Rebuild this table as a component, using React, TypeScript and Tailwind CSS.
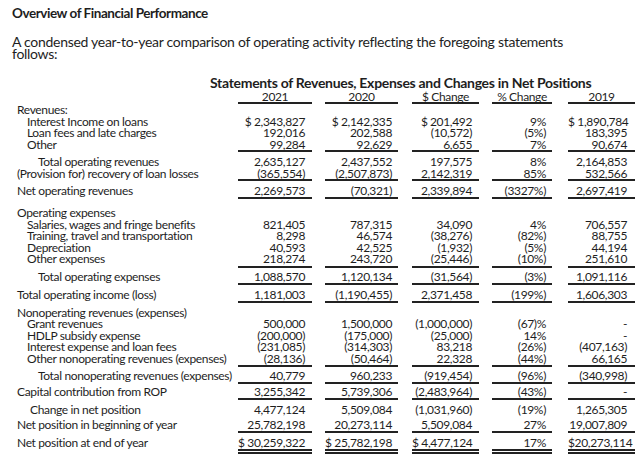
import React from "react";

type Cell = string | { dollar: string };

type Row = {
  label: string;
  ind: string;
  v?: Cell[];
  ul?: boolean;
  dbl?: boolean;
  cls: string;
};

const rows: Row[] = [
  { label: "Revenues:", ind: "pl-[17px]", cls: "h-[11.5px]" },
  { label: "Interest Income on loans", ind: "pl-[27px]", v: ["$ 2,343,827", "$ 2,142,335", { dollar: "201,492" }, "9%", "$ 1,890,784"], cls: "mt-[0.5px] h-[11.5px]" },
  { label: "Loan fees and late charges", ind: "pl-[27px]", v: ["192,016", "202,588", "(10,572)", "(5%)", "183,395"], cls: "h-[11.5px]" },
  { label: "Other", ind: "pl-[27px]", v: ["99,284", "92,629", "6,655", "7%", "90,674"], ul: true, cls: "h-[13.5px]" },
  { label: "Total operating revenues", ind: "pl-[38px]", v: ["2,635,127", "2,437,552", "197,575", "8%", "2,164,853"], cls: "mt-[4px] h-[11.5px]" },
  { label: "(Provision for) recovery of loan losses", ind: "pl-[17px]", v: ["(365,554)", "(2,507,873)", "2,142,319", "85%", "532,566"], ul: true, cls: "h-[13.5px]" },
  { label: "Net operating revenues", ind: "pl-[17px]", v: ["2,269,573", "(70,321)", "2,339,894", "(3327%)", "2,697,419"], ul: true, cls: "mt-[3.5px] h-[14.5px]" },
  { label: "Operating expenses", ind: "pl-[17px]", cls: "mt-[8px] h-[11.5px]" },
  { label: "Salaries, wages and fringe benefits", ind: "pl-[27px]", v: ["821,405", "787,315", "34,090", "4%", "706,557"], cls: "h-[11.5px]" },
  { label: "Training, travel and transportation", ind: "pl-[27px]", v: ["8,298", "46,574", "(38,276)", "(82%)", "88,755"], cls: "h-[11.5px]" },
  { label: "Depreciation", ind: "pl-[27px]", v: ["40,593", "42,525", "(1,932)", "(5%)", "44,194"], cls: "h-[11.5px]" },
  { label: "Other expenses", ind: "pl-[27px]", v: ["218,274", "243,720", "(25,446)", "(10%)", "251,610"], ul: true, cls: "h-[14.5px]" },
  { label: "Total operating expenses", ind: "pl-[38px]", v: ["1,088,570", "1,120,134", "(31,564)", "(3%)", "1,091,116"], ul: true, cls: "mt-[3.5px] h-[14px]" },
  { label: "Total operating income (loss)", ind: "pl-[17px]", v: ["1,181,003", "(1,190,455)", "2,371,458", "(199%)", "1,606,303"], ul: true, cls: "mt-[4px] h-[14px]" },
  { label: "Nonoperating revenues (expenses)", ind: "pl-[17px]", cls: "mt-[3.5px] h-[11.5px]" },
  { label: "Grant revenues", ind: "pl-[27px]", v: ["500,000", "1,500,000", "(1,000,000)", "(67)%", "-"], cls: "h-[11.5px]" },
  { label: "HDLP subsidy expense", ind: "pl-[27px]", v: ["(200,000)", "(175,000)", "(25,000)", "14%", "-"], cls: "h-[11.5px]" },
  { label: "Interest expense and loan fees", ind: "pl-[27px]", v: ["(231,085)", "(314,303)", "83,218", "(26%)", "(407,163)"], cls: "h-[11.5px]" },
  { label: "Other nonoperating revenues (expenses)", ind: "pl-[27px]", v: ["(28,136)", "(50,464)", "22,328", "(44%)", "66,165"], ul: true, cls: "h-[14px]" },
  { label: "Total nonoperating revenues (expenses)", ind: "pl-[38px]", v: ["40,779", "960,233", "(919,454)", "(96%)", "(340,998)"], ul: true, cls: "mt-[3.5px] h-[14px]" },
  { label: "Capital contribution from ROP", ind: "pl-[17px]", v: ["3,255,342", "5,739,306", "(2,483,964)", "(43%)", "-"], ul: true, cls: "mt-[1.5px] h-[14px]" },
  { label: "Change in net position", ind: "pl-[30px]", v: ["4,477,124", "5,509,084", "(1,031,960)", "(19%)", "1,265,305"], cls: "mt-[4px] h-[11.5px]" },
  { label: "Net position in beginning of year", ind: "pl-[17px]", v: ["25,782,198", "20,273,114", "5,509,084", "27%", "19,007,809"], ul: true, cls: "mt-[3.5px] h-[14.5px]" },
  { label: "Net position at end of year", ind: "pl-[17px]", v: ["$ 30,259,322", "$ 25,782,198", "$ 4,477,124", "17%", "$20,273,114"], dbl: true, cls: "mt-[4px] h-[17px]" },
];

const cols = [
  "w-[74px] pr-[7px]",
  "ml-[13px] w-[73px] pr-[6px]",
  "ml-[14px] w-[67px] pr-[7px]",
  "ml-[13px] w-[60px] pr-[6px]",
  "ml-[16px] w-[67px] pr-[8px]",
];

const headCols = [
  "w-[74px]",
  "ml-[13px] w-[73px]",
  "ml-[14px] w-[67px]",
  "ml-[13px] w-[60px]",
  "ml-[16px] w-[67px]",
];

const heads = ["2021", "2020", "$ Change", "% Change", "2019"];

function TableRow({ r }: { r: Row }) {
  const line = r.dbl
    ? "border-b-[5px] border-double border-[#222]"
    : r.ul
    ? "border-b-2 border-[#222]"
    : "";
  return (
    <div className={`flex leading-[11.5px] ${r.cls}`}>
      <div className={`w-[238px] shrink-0 whitespace-nowrap ${r.ind}`}>{r.label}</div>
      {r.v &&
        r.v.map((c, i) => (
          <div key={i} className={`shrink-0 whitespace-nowrap text-right ${cols[i]} ${line}`}>
            {typeof c === "string" ? (
              c
            ) : (
              <div className="flex justify-between pl-[9px]">
                <span>$</span>
                <span>{c.dollar}</span>
              </div>
            )}
          </div>
        ))}
    </div>
  );
}

export default function App() {
  return (
    <div className="w-[640px] h-[465px] overflow-hidden bg-white text-[#1e1e1e] font-['Lato',sans-serif]">
      <h1 className="pl-[12px] pt-[5px] text-[13.5px] font-bold leading-[16px] tracking-[-0.45px]">
        Overview of Financial Performance
      </h1>
      <p className="ml-[12px] mt-[15px] w-[551px] text-justify text-[14px] leading-[12px] tracking-[-0.3px]">
        A condensed year-to-year comparison of operating activity reflecting the foregoing statements follows:
      </p>
      <div className="mt-[15px] pl-[210px] whitespace-nowrap text-[14px] font-bold leading-[16px] tracking-[-0.3px]">
        Statements of Revenues, Expenses and Changes in Net Positions
      </div>
      <div className="text-[12px] tracking-[-0.35px]">
        <div className="flex h-[12.5px] leading-[11.5px]">
          <div className="w-[238px] shrink-0" />
          {heads.map((h, i) => (
            <div key={h} className={`shrink-0 text-center border-b-2 border-[#222] ${headCols[i]}`}>
              {h}
            </div>
          ))}
        </div>
        {rows.map((r, i) => (
          <TableRow key={i} r={r} />
        ))}
      </div>
    </div>
  );
}
